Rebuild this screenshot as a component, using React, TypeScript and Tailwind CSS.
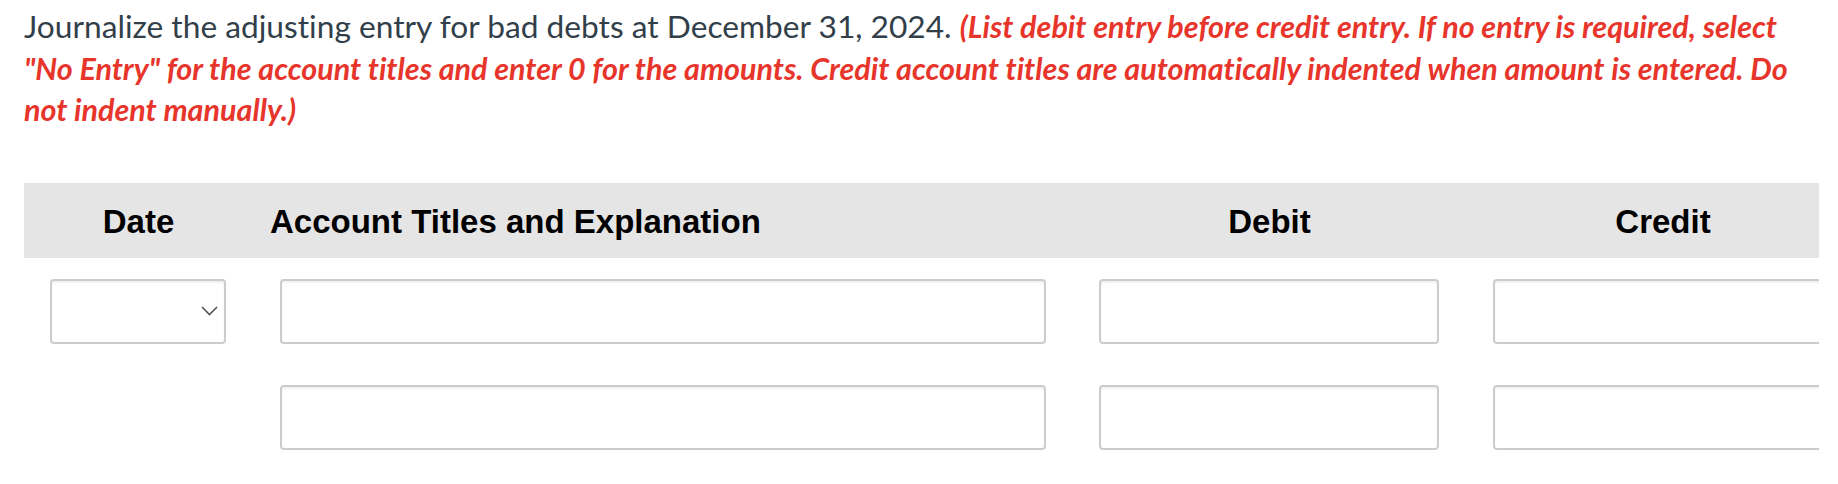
import React from "react";

const Chevron = () => (
  <svg width="17" height="10" viewBox="0 0 17 10" fill="none">
    <path d="M1 1 L8.5 8.5 L16 1" stroke="#555555" strokeWidth="1.6" />
  </svg>
);

const inputBase =
  "shrink-0 h-[65px] border-2 border-[#cccccc] rounded-[4px] bg-white shadow-[inset_0_2px_2px_rgba(0,0,0,0.06)]";

export default function App() {
  return (
    <div className="w-[1838px] h-[484px] bg-white overflow-hidden">
      <p
        className="pl-[24px] w-[1819px] pt-[6px] text-[31.7px] leading-[41.5px] text-[#323f4a] [font-variant-ligatures:none]"
        style={{ fontFamily: "Lato, 'Noto Sans', sans-serif" }}
      >
        Journalize the adjusting entry for bad debts at December 31, 2024.{" "}
        <span className="text-[30.5px] font-bold italic text-[#e8352b]">
          (List debit entry before credit entry. If no entry is required, select "No Entry" for the
          account titles and enter 0 for the amounts. Credit account titles are automatically
          indented when amount is entered. Do not indent manually.)
        </span>
      </p>
      <div className="ml-[24px] mt-[52px] w-[1795px] overflow-hidden">
        <div
          className="flex h-[75px] items-center bg-[#e5e5e5] pt-[3px] text-[33px] font-bold text-black"
          style={{ fontFamily: "'Liberation Sans', Arial, sans-serif" }}
        >
          <div className="w-[229px] shrink-0 text-center">Date</div>
          <div className="w-[820px] shrink-0 pl-[17px]">Account Titles and Explanation</div>
          <div className="w-[393px] shrink-0 text-center">Debit</div>
          <div className="w-[394px] shrink-0 text-center">Credit</div>
        </div>
        <div className="flex mt-[21px]">
          <div className="w-[229px] shrink-0 pl-[26px]">
            <div className={`${inputBase} w-[176px] flex items-center justify-end pr-[6px]`}>
              <Chevron />
            </div>
          </div>
          <div className="w-[820px] shrink-0 pl-[27px]">
            <div className={`${inputBase} w-[766px]`} />
          </div>
          <div className="w-[393px] shrink-0 pl-[26px]">
            <div className={`${inputBase} w-[340px]`} />
          </div>
          <div className="w-[394px] shrink-0 pl-[27px]">
            <div className={`${inputBase} w-[340px]`} />
          </div>
        </div>
        <div className="flex mt-[41px]">
          <div className="w-[229px] shrink-0" />
          <div className="w-[820px] shrink-0 pl-[27px]">
            <div className={`${inputBase} w-[766px]`} />
          </div>
          <div className="w-[393px] shrink-0 pl-[26px]">
            <div className={`${inputBase} w-[340px]`} />
          </div>
          <div className="w-[394px] shrink-0 pl-[27px]">
            <div className={`${inputBase} w-[340px]`} />
          </div>
        </div>
      </div>
    </div>
  );
}
